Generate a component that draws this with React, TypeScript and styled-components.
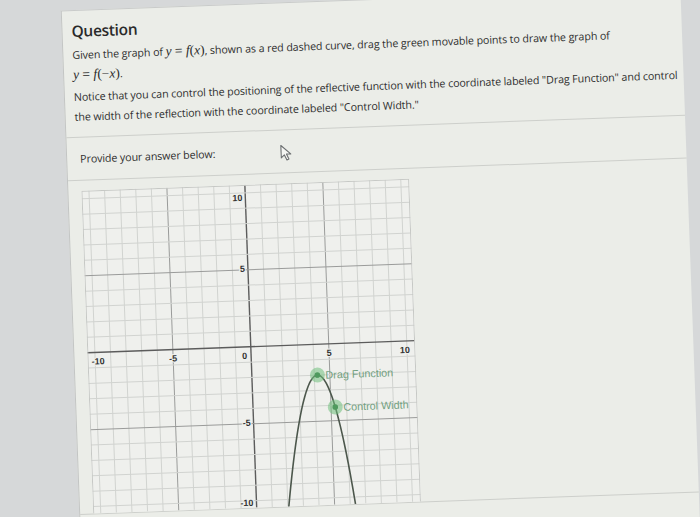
import React from "react";
import styled, { createGlobalStyle } from "styled-components";

const GlobalStyle = createGlobalStyle`
  html, body {
    margin: 0;
    padding: 0;
    background: #d6d8d9;
  }
  body {
    font-family: "Open Sans", "Noto Sans", Arial, sans-serif;
  }
`;

const Viewport = styled.div`
  width: 700px;
  height: 517px;
  overflow: hidden;
  background: #d6d8d9;
`;

// the reference is a photo of a slightly tilted screen
const Tilt = styled.div`
  width: 700px;
  height: 517px;
  box-sizing: border-box;
  padding: 0 10px 0 70px;
  transform: rotate(-2.1deg);
  transform-origin: 350px 258px;
`;

const Card = styled.div`
  background: #ebede8;
  border-left: 1px solid #c3c5c4;
  border-top: 1px solid #c9cbca;
  min-height: 560px;
  color: #2f2f2f;
`;

const Header = styled.div`
  padding: 9px 10px 10px 9px;
  border-bottom: 1px solid #cdcfcb;
`;

const Title = styled.h2`
  margin: 0;
  font-size: 15.5px;
  line-height: 22px;
  font-weight: 600;
  color: #2a2a2a;
  letter-spacing: -0.3px;
`;

const Paragraph = styled.p<{ $gap?: number }>`
  margin: ${(p) => p.$gap ?? 0}px 0 0;
  font-size: 10.7px;
  line-height: 20px;
  letter-spacing: -0.1px;
  white-space: nowrap;
`;

const Math = styled.span`
  font-family: "Liberation Serif", "DejaVu Serif", serif;
  font-size: 13.5px;
  letter-spacing: 0;
  color: #2a2a2a;
`;

const V = styled.i`
  font-style: italic;
`;

const AnswerRow = styled.div`
  position: relative;
  height: 42px;
  display: flex;
  align-items: center;
  padding-left: 13px;
  border-bottom: 1px solid #cdcfcb;
  font-size: 10.7px;
  letter-spacing: -0.1px;
`;

const Cursor = styled.svg`
  position: absolute;
  left: 213px;
  top: 14px;
`;

const GraphSection = styled.div`
  padding: 10px 0 0 13px;
  height: 323px;
  border-bottom: 1px solid #cdcfcb;
`;

const GraphSvg = styled.svg`
  display: block;
  background: #eff0ed;
`;

const AxisLabel = styled.text`
  font-family: "Liberation Sans", Arial, sans-serif;
  font-size: 9px;
  font-weight: 600;
  fill: #333;
  paint-order: stroke;
  stroke: #eff0ed;
  stroke-width: 2px;
`;

const PointLabel = styled.text`
  font-family: "Liberation Sans", Arial, sans-serif;
  font-size: 10.8px;
  fill: #72a07f;
`;

const px = (x: number) => 163.6 + 15.6 * x;
const py = (y: number) => 162 - 15.4 * y;

const ticks = Array.from({ length: 21 }, (_, i) => i - 10);

const vertex = { x: 4.2, y: -2 };
const a = 1.85;
const control = { x: 5.27, y: vertex.y - a * 1.07 * 1.07 };

function parabola() {
  const half = globalThis.Math.sqrt((vertex.y + 10.8) / a);
  const pts: string[] = [];
  for (let t = -half; t <= half + 0.001; t += 0.05) {
    const x = vertex.x + t;
    const y = vertex.y - a * t * t;
    pts.push(`${px(x).toFixed(2)},${py(y).toFixed(2)}`);
  }
  return "M" + pts.join(" L");
}

const lineColor = (i: number) =>
  i === 0 ? "#5c5c5c" : globalThis.Math.abs(i) === 5 ? "#9a9b9a" : "#d1d3d0";

function MovablePoint({ x, y, label }: { x: number; y: number; label: string }) {
  return (
    <g>
      <circle cx={px(x)} cy={py(y)} r={7.5} fill="rgba(112,192,124,0.55)" />
      <circle cx={px(x)} cy={py(y)} r={2.8} fill="#4f9a5e" />
      <PointLabel x={px(x) + 8} y={py(y) + 4}>
        {label}
      </PointLabel>
    </g>
  );
}

function Graph() {
  return (
    <GraphSvg width={328} height={323} viewBox="0 0 328 323">
      {ticks.map((i) => (
        <line
          key={"v" + i}
          x1={px(i)}
          x2={px(i)}
          y1={0}
          y2={323}
          stroke={lineColor(i)}
          strokeWidth={i === 0 ? 1.4 : 1}
        />
      ))}
      {ticks.map((j) => (
        <line
          key={"h" + j}
          x1={0}
          x2={328}
          y1={py(j)}
          y2={py(j)}
          stroke={lineColor(j)}
          strokeWidth={j === 0 ? 1.4 : 1}
        />
      ))}
      <rect x={0.5} y={0.5} width={327} height={330} fill="none" stroke="#c6c8c5" />

      <AxisLabel x={px(0) - 3} y={py(10) + 8} textAnchor="end">10</AxisLabel>
      <AxisLabel x={px(0) - 3} y={py(5) + 2} textAnchor="end">5</AxisLabel>
      <AxisLabel x={px(0) - 3} y={py(-5) + 2} textAnchor="end">-5</AxisLabel>
      <AxisLabel x={px(0) - 3} y={py(-10) + 5} textAnchor="end">-10</AxisLabel>
      <AxisLabel x={px(0) - 4} y={py(0) + 12} textAnchor="end">0</AxisLabel>
      <AxisLabel x={px(-10) + 3} y={py(0) + 12} textAnchor="middle">-10</AxisLabel>
      <AxisLabel x={px(-5)} y={py(0) + 12} textAnchor="middle">-5</AxisLabel>
      <AxisLabel x={px(5)} y={py(0) + 12} textAnchor="middle">5</AxisLabel>
      <AxisLabel x={px(10) - 2} y={py(0) + 12} textAnchor="middle">10</AxisLabel>

      <path d={parabola()} fill="none" stroke="#4c574c" strokeWidth={1.6} />

      <MovablePoint x={vertex.x} y={vertex.y} label="Drag Function" />
      <MovablePoint x={control.x} y={control.y} label="Control Width" />
    </GraphSvg>
  );
}

export default function App() {
  return (
    <>
      <GlobalStyle />
      <Viewport>
        <Tilt>
          <Card>
            <Header>
              <Title>Question</Title>
              <Paragraph $gap={3}>
                Given the graph of{" "}
                <Math>
                  <V>y</V> = <V>f</V>(<V>x</V>)
                </Math>
                , shown as a red dashed curve, drag the green movable points to draw the graph of
                <br />
                <Math>
                  <V>y</V> = <V>f</V>(−<V>x</V>)
                </Math>
                .
              </Paragraph>
              <Paragraph $gap={2}>
                Notice that you can control the positioning of the reflective function with the
                coordinate labeled "Drag Function" and control
                <br />
                the width of the reflection with the coordinate labeled "Control Width."
              </Paragraph>
            </Header>
            <AnswerRow>
              Provide your answer below:
              <Cursor width="12" height="17" viewBox="0 0 12 17">
                <path
                  d="M1 1 L1 13.5 L4.2 10.6 L6.6 15.8 L8.6 14.9 L6.3 9.8 L10.6 9.8 Z"
                  fill="#f4f5f2"
                  stroke="#6b6e70"
                  strokeWidth="1.1"
                  strokeLinejoin="round"
                />
              </Cursor>
            </AnswerRow>
            <GraphSection>
              <Graph />
            </GraphSection>
          </Card>
        </Tilt>
      </Viewport>
    </>
  );
}
